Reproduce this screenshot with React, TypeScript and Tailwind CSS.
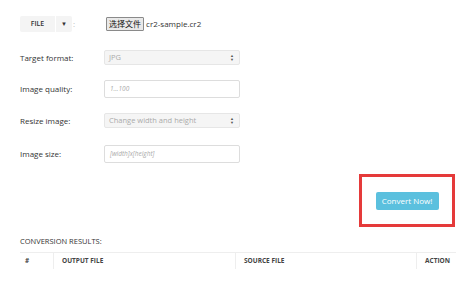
export default function App() {
  const rows = [
    { label: "Target format:", kind: "select", value: "JPG", gap: "mt-[18px]" },
    { label: "Image quality:", kind: "input", value: "1...100", gap: "mt-[15px]" },
    { label: "Resize image:", kind: "select", value: "Change width and height", gap: "mt-[15px]" },
    { label: "Image size:", kind: "input", value: "[width]x[height]", gap: "mt-[17px]" },
  ];

  return (
    <div className="h-[292px] w-[474px] overflow-hidden bg-white font-['Open_Sans',sans-serif] text-[#333]">
      <div className="px-5 pt-[16px]">
        {/* file row */}
        <div className="flex h-[16px] items-center">
          <div className="flex h-[16px] w-[52px] items-center rounded-[2px] bg-[#f4f4f4] text-[7px] font-semibold">
            <span className="w-[35px] text-center">FILE</span>
            <span className="h-full w-px bg-white" />
            <span className="flex-1 text-center text-[6px]">▼</span>
          </div>
          <span className="ml-[1px] text-[8px] text-[#bbb]">:</span>
          <div className="ml-[31px] flex h-[14px] items-center rounded-[1px] border border-[#8a8a8a] bg-[#e9e9e9] px-[2px] font-['Noto_Sans_CJK_SC',sans-serif] text-[8px] text-[#111]">
            选择文件
          </div>
          <span className="ml-[2px] text-[8px] text-[#333]">cr2-sample.cr2</span>
        </div>

        {rows.map((r) => (
          <div key={r.label} className={`flex items-center ${r.gap}`}>
            <span className="w-[84px] text-[8px] text-[#333]">{r.label}</span>
            {r.kind === "select" ? (
              <div className="flex h-[15px] w-[136px] items-center justify-between rounded-[2px] border border-[#e6e6e6] bg-[#f5f5f5] pl-[4px] pr-[5px] text-[7.5px] text-[#aaa]">
                <span>{r.value}</span>
                <span className="flex flex-col text-[4px] leading-[4px] text-[#555]">
                  <span>▲</span>
                  <span>▼</span>
                </span>
              </div>
            ) : (
              <div className="flex h-[18px] w-[136px] items-center rounded-[2px] border border-[#ddd] bg-white pl-[5px] text-[6.5px] italic text-[#aaa]">
                {r.value}
              </div>
            )}
          </div>
        ))}

        {/* convert */}
        <div className="mt-[11px] mr-[-1px] flex justify-end">
          <div className="flex h-[53px] w-[96px] items-center justify-center border-[3px] border-[#e53a3a]">
            <button className="h-[18px] w-[63px] rounded-[2px] bg-[#5bc0de] text-[8px] text-white">
              Convert Now!
            </button>
          </div>
        </div>

        {/* results */}
        <div className="mt-[9px] text-[7.5px] text-[#333]">CONVERSION RESULTS:</div>
        <div className="mt-[5px] mr-[-2px] grid grid-cols-[33px_182px_181px_40px] border-t border-[#eee] text-[6.5px] font-bold text-[#444]">
          <div className="h-[16px] pl-[5px] pt-[3px]">#</div>
          <div className="h-[16px] border-l border-[#eee] pl-[8px] pt-[3px]">OUTPUT FILE</div>
          <div className="h-[16px] border-l border-[#eee] pl-[8px] pt-[3px]">SOURCE FILE</div>
          <div className="h-[16px] border-l border-[#eee] pl-[8px] pt-[3px]">ACTION</div>
        </div>
      </div>
    </div>
  );
}
